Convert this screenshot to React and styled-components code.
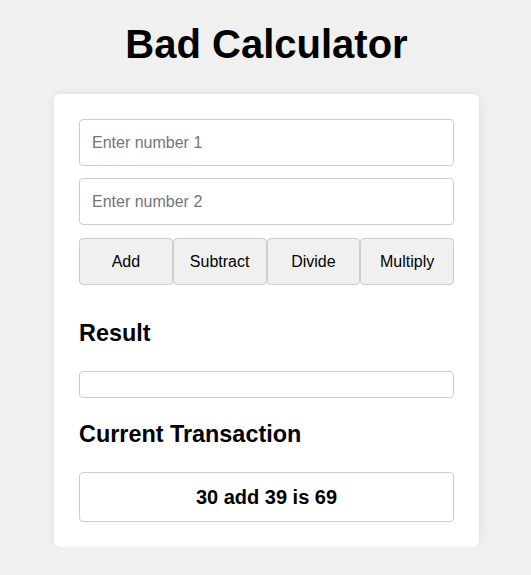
import React from "react";
import styled, { createGlobalStyle } from "styled-components";

const GlobalStyle = createGlobalStyle`
  html, body {
    margin: 0;
    padding: 0;
    background-color: #f0f0f0;
    font-family: "Liberation Sans", Arial, sans-serif;
  }
`;

const operations = ["Add", "Subtract", "Divide", "Multiply"];

const App = () => {
  return (
    <Page>
      <GlobalStyle />
      <Title>Bad Calculator</Title>
      <Card>
        <Input type="number" placeholder="Enter number 1" />
        <Input type="number" placeholder="Enter number 2" />
        <ButtonRow>
          {operations.map((op) => (
            <OpButton key={op}>{op}</OpButton>
          ))}
        </ButtonRow>
        <Heading>Result</Heading>
        <ResultBox />
        <Heading $tight>Current Transaction</Heading>
        <Transaction>30 add 39 is 69</Transaction>
      </Card>
    </Page>
  );
};

const Page = styled.div`
  display: flex;
  flex-direction: column;
  align-items: center;
  padding: 21px 0 0 2px;
`;

const Title = styled.h1`
  margin: 0 0 27px;
  font-size: 40px;
  line-height: 46px;
  font-weight: bold;
  color: #000000;
`;

const Card = styled.div`
  box-sizing: border-box;
  width: 425px;
  padding: 25px;
  background-color: #ffffff;
  border-radius: 6px;
  box-shadow: 0 0 10px rgba(0, 0, 0, 0.08);
  display: flex;
  flex-direction: column;
`;

const Input = styled.input`
  box-sizing: border-box;
  width: 100%;
  height: 47px;
  margin: 0 0 12px;
  padding: 0 12px;
  border: 1px solid #cccccc;
  border-radius: 4px;
  font-family: inherit;
  font-size: 16px;
  color: #000000;
  outline: none;

  &::placeholder {
    color: #757575;
  }
`;

const ButtonRow = styled.div`
  display: grid;
  grid-template-columns: repeat(4, 1fr);
  margin-top: 1px;
`;

const OpButton = styled.button`
  box-sizing: border-box;
  height: 47px;
  padding: 0;
  background-color: #f0f0f0;
  border: 1px solid #cccccc;
  border-radius: 4px;
  font-family: inherit;
  font-size: 16px;
  color: #000000;
  cursor: pointer;
`;

const Heading = styled.h2`
  margin: ${(p) => (p.$tight ? "24px 0 25px" : "36px 0 25px")};
  font-size: 23.4px;
  line-height: 25px;
  font-weight: bold;
  color: #000000;
`;

const ResultBox = styled.div`
  box-sizing: border-box;
  height: 27px;
  border: 1px solid #cccccc;
  border-radius: 4px;
`;

const Transaction = styled.div`
  box-sizing: border-box;
  height: 50px;
  display: flex;
  align-items: center;
  justify-content: center;
  border: 1px solid #cccccc;
  border-radius: 4px;
  font-size: 20px;
  font-weight: bold;
  color: #000000;
`;

export default App;
